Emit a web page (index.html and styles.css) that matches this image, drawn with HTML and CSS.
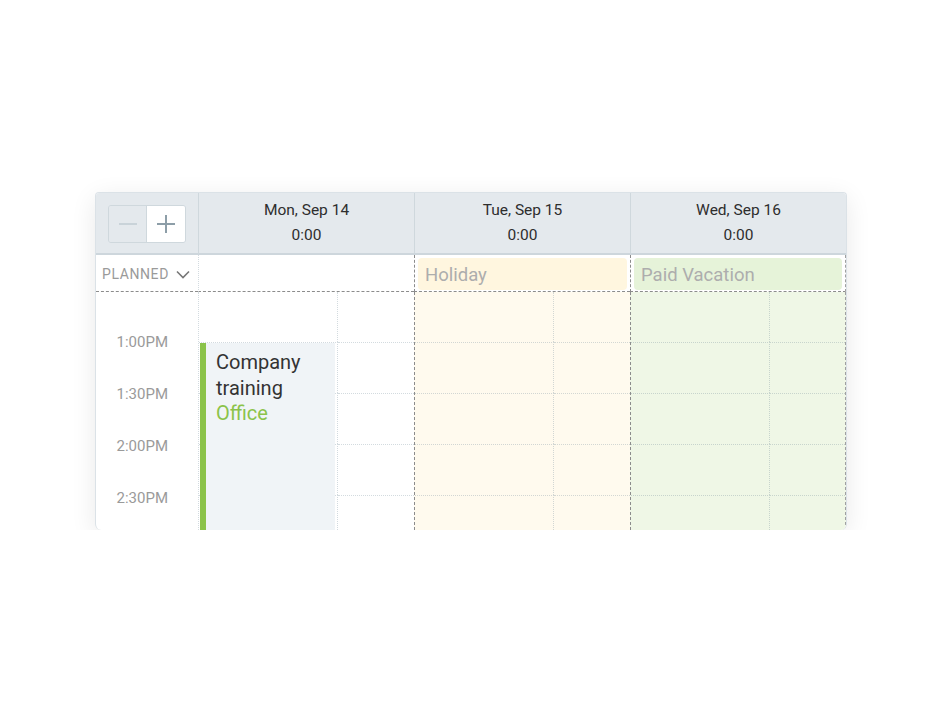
FILE: index.html
```html
<!DOCTYPE html>
<html lang="en">
<head>
    <meta charset="UTF-8">
    <meta name="viewport" content="width=device-width, initial-scale=1.0">
    <title>Schedule</title>
    <link rel="stylesheet" href="styles.css">
</head>
<body>
    <div class="page">
        <div class="schedule">
            <!-- header row -->
            <div class="head corner">
                <div class="zoom">
                    <button class="zoom-btn minus" aria-label="Zoom out">
                        <svg width="20" height="20" viewBox="0 0 20 20"><path d="M1 10h18" stroke="#c9d3d9" stroke-width="2"/></svg>
                    </button>
                    <button class="zoom-btn plus" aria-label="Zoom in">
                        <svg width="20" height="20" viewBox="0 0 20 20"><path d="M1 10h18M10 1v18" stroke="#8d9ea8" stroke-width="2"/></svg>
                    </button>
                </div>
            </div>
            <div class="head day">Mon, Sep 14<br>0:00</div>
            <div class="head day">Tue, Sep 15<br>0:00</div>
            <div class="head day">Wed, Sep 16<br>0:00</div>

            <!-- planned row -->
            <div class="planned-label">
                PLANNED
                <svg class="chevron" width="14" height="9" viewBox="0 0 14 9"><path d="M1 1.5l6 6 6-6" fill="none" stroke="#777" stroke-width="1.6"/></svg>
            </div>
            <div class="planned mon"></div>
            <div class="planned tue"><span class="pill holiday">Holiday</span></div>
            <div class="planned wed"><span class="pill vacation">Paid Vacation</span></div>

            <!-- time grid -->
            <div class="times">
                <div class="time">1:00PM</div>
                <div class="time">1:30PM</div>
                <div class="time">2:00PM</div>
                <div class="time">2:30PM</div>
            </div>

            <div class="day-col mon">
                <div class="slot left"></div><div class="slot"></div>
                <div class="slot left"></div><div class="slot"></div>
                <div class="slot left"></div><div class="slot"></div>
                <div class="slot left"></div><div class="slot"></div>
                <div class="slot left"></div><div class="slot"></div>
                <div class="event">
                    <div class="event-title">Company training</div>
                    <div class="event-place">Office</div>
                </div>
            </div>

            <div class="day-col tue">
                <div class="slot left"></div><div class="slot"></div>
                <div class="slot left"></div><div class="slot"></div>
                <div class="slot left"></div><div class="slot"></div>
                <div class="slot left"></div><div class="slot"></div>
                <div class="slot left"></div><div class="slot"></div>
            </div>

            <div class="day-col wed">
                <div class="slot left"></div><div class="slot"></div>
                <div class="slot left"></div><div class="slot"></div>
                <div class="slot left"></div><div class="slot"></div>
                <div class="slot left"></div><div class="slot"></div>
                <div class="slot left"></div><div class="slot"></div>
            </div>
        </div>
    </div>
</body>
</html>
```

FILE: styles.css
```css
* {
    box-sizing: border-box;
}

body {
    margin: 0;
    background: #fff;
    font-family: Roboto, 'Liberation Sans', sans-serif;
    color: #333;
}

.page {
    padding: 192px 0 0 95px;
}

.schedule {
    width: 752px;
    display: grid;
    grid-template-columns: 102px 216px 216px 216px;
    grid-template-rows: 62px 37px 238px;
    border: 1px solid #dbe2e7;
    border-bottom: none;
    border-radius: 4px 4px 6px 6px;
    overflow: hidden;
    background: #fff;
    box-shadow: 0 6px 26px rgba(0, 0, 0, 0.09);
}

/* Header */
.head {
    background: #e4e9ed;
    border-bottom: 2px solid #cdd6dc;
}

.head.day {
    border-left: 1px solid #cfd8dd;
    text-align: center;
    font-size: 15.5px;
    line-height: 25px;
    padding-top: 5px;
    color: #2e2e2e;
}

.corner {
    display: flex;
    align-items: center;
    justify-content: center;
    padding-top: 1px;
}

.zoom {
    display: flex;
    border: 1px solid #cfd8dd;
    border-radius: 3px;
    overflow: hidden;
}

.zoom-btn {
    width: 38px;
    height: 36px;
    border: none;
    padding: 0;
    display: flex;
    align-items: center;
    justify-content: center;
    cursor: pointer;
}

.zoom-btn.minus {
    background: #e4e9ed;
    border-right: 1px solid #cfd8dd;
}

.zoom-btn.plus {
    background: #fff;
}

/* Planned row */
.planned-label {
    display: flex;
    align-items: center;
    padding: 2px 0 0 6px;
    font-size: 14px;
    letter-spacing: 0.6px;
    color: #9a9a9a;
    border-bottom: 1px dashed #8c8c8c;
}

.chevron {
    margin-left: 7px;
    margin-top: 1px;
}

.planned {
    padding: 3px 3px 1px 3px;
    border-bottom: 1px dashed #8c8c8c;
}

.planned.mon {
    border-left: 1px dotted #d3dbe0;
}

.planned.tue,
.planned.wed {
    border-left: 1px dashed #8c8c8c;
}

.planned.wed {
    border-right: 1px dashed #a0a0a0;
}

.pill {
    display: flex;
    align-items: center;
    height: 32px;
    padding: 2px 0 0 7px;
    border-radius: 4px;
    font-size: 18.5px;
    color: #adadad;
}

.holiday {
    background: #fff6df;
}

.vacation {
    background: #e6f3d9;
}

/* Time grid */
.times {
    padding-top: 24px;
    padding-right: 30px;
    text-align: right;
}

.time {
    height: 52px;
    line-height: 52px;
    font-size: 15px;
    color: #9a9a9a;
}

.day-col {
    position: relative;
    display: grid;
    grid-template-columns: 139px 1fr;
    grid-template-rows: 50px 51px 51px 51px 1fr;
}

.day-col.mon {
    border-left: 1px dotted #d3dbe0;
}

.day-col.tue {
    background: #fffaee;
    border-left: 1px dashed #8c8c8c;
}

.day-col.wed {
    background: #eff7e6;
    border-left: 1px dashed #8c8c8c;
    border-right: 1px dashed #a0a0a0;
}

.slot {
    border-top: 1px dotted rgba(110, 135, 150, 0.3);
}

.slot:nth-child(1),
.slot:nth-child(2) {
    border-top: none;
}

.slot.left {
    border-right: 1px dotted rgba(110, 135, 150, 0.3);
}

.event {
    position: absolute;
    top: 51px;
    left: 1px;
    width: 135px;
    bottom: 0;
    background: #f0f4f7;
    border-left: 6px solid #8bc34a;
    padding: 7px 8px 0 10px;
    font-size: 20px;
    line-height: 25.5px;
}

.event-title {
    color: #333;
}

.event-place {
    color: #8bc34a;
}
```
